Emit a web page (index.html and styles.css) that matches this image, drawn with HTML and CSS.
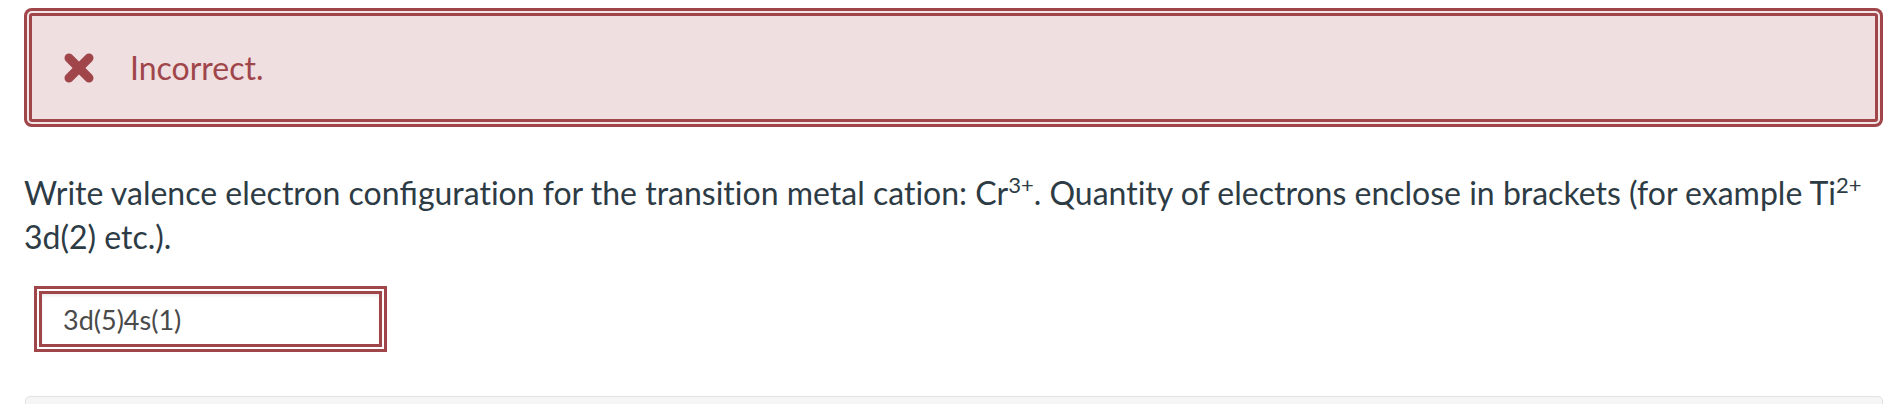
FILE: index.html
```html
<!DOCTYPE html>
<html>
<head>
<meta charset="utf-8">
<link rel="stylesheet" href="styles.css">
</head>
<body>
<div class="page">
  <div class="alert">
    <svg class="x-icon" width="30" height="30" viewBox="0 0 30 30">
      <line x1="5" y1="5" x2="25" y2="25" />
      <line x1="25" y1="5" x2="5" y2="25" />
    </svg>
    <span class="alert-text">Incorrect.</span>
  </div>
  <p class="question">Write valence electron con<span class="lig">fi</span>guration for the transition metal cation: Cr<sup>3+</sup>. Quantity of electrons enclose in brackets (for example Ti<sup>2+</sup> 3d(2) etc.).</p>
  <div class="answer">3d(5)4s(1)</div>
  <div class="panel"></div>
</div>
</body>
</html>
```
FILE: styles.css
```css
html, body {
  margin: 0;
  padding: 0;
  background: #ffffff;
}
.page {
  padding: 13px 20px 0 29px;
  font-family: Lato, "Open Sans", sans-serif;
  font-variant-ligatures: none;
}
.lig {
  font-variant-ligatures: common-ligatures;
}
.alert {
  display: flex;
  align-items: center;
  height: 109px;
  box-sizing: border-box;
  border: 3px solid #a0464b;
  background: #efdfe0;
  box-shadow: 0 0 0 2px #f3e6e7, 0 0 0 5px #a0464b;
  border-radius: 3px;
  padding-left: 32px;
}
.x-icon line {
  stroke: #a0464b;
  stroke-width: 9;
  stroke-linecap: round;
}
.x-icon {
  flex: none;
}
.alert-text {
  margin-left: 36px;
  color: #a0464b;
  font-size: 32px;
}
.question {
  margin: 49px 0 0 -5px;
  color: #2d3b45;
  font-size: 32px;
  line-height: 44px;
}
.question sup {
  font-size: 22px;
  line-height: 0;
}
.answer {
  margin: 32px 0 0 10px;
  width: 343px;
  height: 56px;
  box-sizing: border-box;
  border: 3px solid #a0464b;
  box-shadow: 0 0 0 2px #ffffff, 0 0 0 5px #a0464b, inset 0 2px 3px rgba(0,0,0,0.08);
  padding-left: 21px;
  display: flex;
  align-items: center;
  color: #4a4a4a;
  font-size: 27px;
}
.panel {
  margin: 49px 0 0 -4px;
  height: 40px;
  width: 1858px;
  box-sizing: border-box;
  border: 1px solid #e2e2e2;
  border-radius: 5px;
  background: #f5f5f5;
}
```
